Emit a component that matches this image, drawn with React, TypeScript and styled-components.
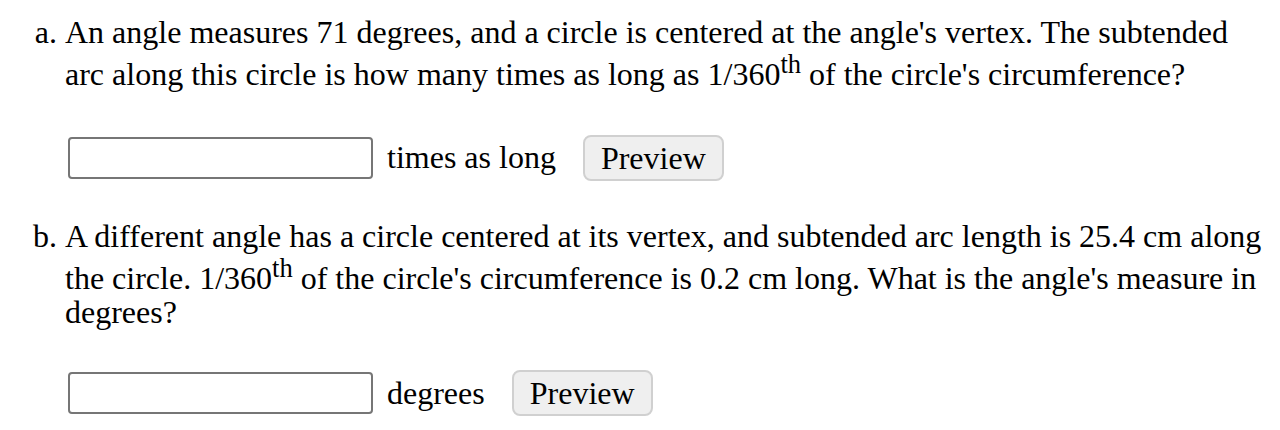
import React from 'react';
import styled, { createGlobalStyle } from 'styled-components';

const GlobalStyle = createGlobalStyle`
  html, body {
    margin: 0;
    background: #ffffff;
  }
  body {
    font-family: 'Liberation Serif', 'Times New Roman', serif;
    color: #000000;
  }
`;

const Sheet = styled.div`
  padding: 15px 15px 0 0;
  font-size: 32px;
  line-height: 35px;
`;

const Part = styled.section<{ $spaceAfter: number }>`
  display: grid;
  grid-template-columns: 57px 1fr;
  column-gap: 8px;
  margin-bottom: ${p => p.$spaceAfter}px;
`;

const Label = styled.div`
  text-align: right;
`;

const Prompt = styled.div`
  margin: 0;
`;

// keeps the ordinal suffix from pushing its line down too far
const Sup = styled.sup`
  font-size: 0.83em;
  line-height: 29px;
`;

const AnswerRow = styled.div<{ $spaceBefore: number }>`
  grid-column: 2;
  display: flex;
  align-items: center;
  padding-left: 3px;
  margin-top: ${p => p.$spaceBefore}px;
`;

const AnswerInput = styled.input`
  box-sizing: border-box;
  width: 305px;
  height: 42px;
  margin: 0 14px 0 0;
  border: 2px solid #767676;
  border-radius: 4px;
  background: #ffffff;
  font: inherit;
  padding: 0 6px;
`;

const Unit = styled.span`
  margin-right: 27px;
`;

const PreviewButton = styled.button`
  box-sizing: border-box;
  height: 46px;
  padding: 0 16px;
  border: 2px solid #d0d0d0;
  border-radius: 8px;
  background: #efefef;
  color: #000000;
  font-family: 'Liberation Serif', 'Times New Roman', serif;
  font-size: 32px;
  line-height: 1;
  cursor: pointer;
`;

interface Question {
  label: string;
  prompt: React.ReactNode;
  unit: string;
  rowGap: number;
  after: number;
}

const questions: Question[] = [
  {
    label: 'a.',
    prompt: (
      <>
        An angle measures 71 degrees, and a circle is centered at the angle's vertex. The
        subtended arc along this circle is how many times as long as 1/360<Sup>th</Sup> of the
        circle's circumference?
      </>
    ),
    unit: 'times as long',
    rowGap: 43,
    after: 38,
  },
  {
    label: 'b.',
    prompt: (
      <>
        A different angle has a circle centered at its vertex, and subtended arc length is 25.4
        cm along the circle. 1/360<Sup>th</Sup> of the circle's circumference is 0.2 cm long.
        What is the angle's measure in degrees?
      </>
    ),
    unit: 'degrees',
    rowGap: 40,
    after: 0,
  },
];

const App: React.FC = () => (
  <>
    <GlobalStyle />
    <Sheet>
      {questions.map(q => (
        <Part key={q.label} $spaceAfter={q.after}>
          <Label>{q.label}</Label>
          <Prompt>{q.prompt}</Prompt>
          <AnswerRow $spaceBefore={q.rowGap}>
            <AnswerInput type="text" aria-label={q.unit} />
            <Unit>{q.unit}</Unit>
            <PreviewButton type="button">Preview</PreviewButton>
          </AnswerRow>
        </Part>
      ))}
    </Sheet>
  </>
);

export default App;
